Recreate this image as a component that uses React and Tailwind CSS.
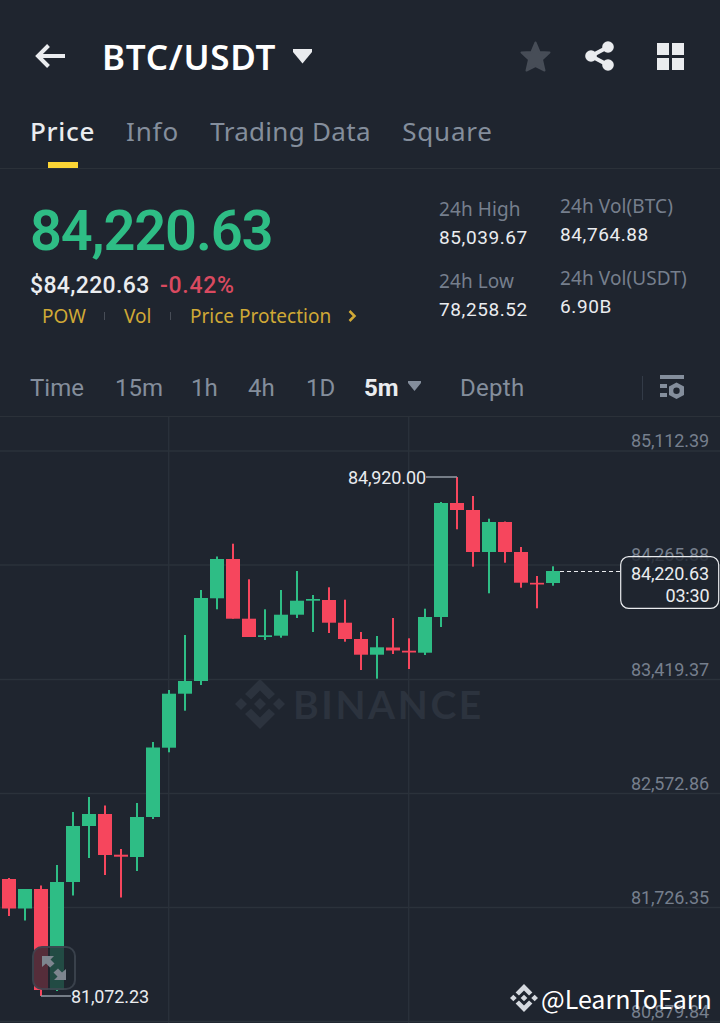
const tabs = [
  { label: 'Price', width: 'w-[65px]', spacing: 'tracking-[0.7px]', active: true },
  { label: 'Info', width: 'w-[53px]', spacing: 'tracking-[0.9px]' },
  { label: 'Trading Data', width: 'w-[161px]', spacing: 'tracking-[0.3px]' },
  { label: 'Square', width: 'w-[91px]', spacing: 'tracking-[0.8px]' },
];

const intervals = [
  { label: 'Time', width: 'w-[85px]' },
  { label: '15m', width: 'w-[76px]' },
  { label: '1h', width: 'w-[57px]' },
  { label: '4h', width: 'w-[58px]' },
  { label: '1D', width: 'w-[57px]' },
];

const stats = [
  [
    { label: '24h High', value: '85,039.67' },
    { label: '24h Low', value: '78,258.52' },
  ],
  [
    { label: '24h Vol(BTC)', value: '84,764.88' },
    { label: '24h Vol(USDT)', value: '6.90B' },
  ],
];

const GREEN = '#2ebd85';
const RED = '#f6465d';

// [wick top, body top, body bottom, wick bottom, color]
const candles = [
  [878, 879, 908.5, 916, RED],
  [889, 889, 908.5, 920.5, GREEN],
  [885.5, 889, 990, 996, RED],
  [865, 882, 990, 991, GREEN],
  [812, 826, 882, 895.5, GREEN],
  [797, 814, 826, 858, GREEN],
  [805.5, 814, 855, 875, RED],
  [849, 854.7, 856.7, 897.5, RED],
  [803, 817, 857, 871, GREEN],
  [742, 747.5, 817, 819, GREEN],
  [690, 693.7, 747.7, 752.3, GREEN],
  [635, 681, 693.7, 710.7, GREEN],
  [590, 598, 681, 685, GREEN],
  [556.5, 559, 598.3, 609.3, GREEN],
  [543.7, 559, 618.7, 618.7, RED],
  [579.3, 618.7, 637, 637, RED],
  [609.3, 635.3, 637, 640, GREEN],
  [590, 614.7, 635.7, 637.7, GREEN],
  [571, 600.7, 614.7, 618, GREEN],
  [595, 599, 600.7, 632, GREEN],
  [587.3, 600, 622.7, 633, RED],
  [599.7, 622.7, 639, 641.7, RED],
  [632, 639, 654.7, 670, RED],
  [636, 647.3, 654.7, 678.7, GREEN],
  [618, 647.5, 650.5, 654, RED],
  [638.3, 650.7, 652.5, 669, RED],
  [608.7, 617, 652.7, 655, GREEN],
  [502, 503, 617, 627, GREEN],
  [477, 503, 510, 529.3, RED],
  [496, 510, 552, 566.7, RED],
  [518.7, 522, 552, 593.3, GREEN],
  [521.5, 522, 552, 562.7, RED],
  [547, 552, 582.7, 587.7, RED],
  [576, 582.8, 584.5, 608.3, RED],
  [566.3, 571, 583, 585.7, GREEN],
];

const priceLevels = [
  { y: 451, label: '85,112.39' },
  { y: 565, label: '84,265.88' },
  { y: 679.5, label: '83,419.37' },
  { y: 793.5, label: '82,572.86' },
  { y: 907.5, label: '81,726.35' },
  { y: 1021.5, label: '80,879.84' },
];

const BinanceLogo = ({ className }) => (
  <svg viewBox="0 0 50 50" className={className} fill="currentColor">
    <path d="M25 0 L40 15 L34 20.5 L25 11.5 L16 20.5 L10 15 Z" />
    <path d="M25 50 L40 35 L34 29.5 L25 38.5 L16 29.5 L10 35 Z" />
    <path d="M25 19 L31 25 L25 31 L19 25 Z" />
    <path d="M6 19 L12 25 L6 31 L0 25 Z" />
    <path d="M44 19 L50 25 L44 31 L38 25 Z" />
  </svg>
);

const Header = () => (
  <header className="flex h-[112px] shrink-0 items-center pl-[35px] pr-[36px]">
    <svg width="31" height="24" viewBox="0 0 31 24" fill="none" stroke="#eaecef" strokeWidth="4">
      <path d="M30 12H3M13.5 1.5L3 12L13.5 22.5" />
    </svg>
    <h1 className="ml-[36px] w-[176px] whitespace-nowrap pt-px font-['Noto_Sans'] text-[35px] font-semibold leading-none tracking-[0.7px] text-white">
      BTC/USDT
    </h1>
    <svg className="ml-[15px]" width="19" height="15" viewBox="0 0 19 15" fill="#eaecef">
      <path d="M0 0H19V3L9.5 14.5L0 3Z" />
    </svg>
    <div className="ml-auto flex items-center">
      <svg width="31" height="31" viewBox="0 0 31 31" fill="#474d57" stroke="#474d57" strokeWidth="2" strokeLinejoin="round">
        <path d="M15.5 1.5L19.5 11L29.5 11.5L22 18.5L24.5 29.5L15.5 25L6.5 29.5L9 18.5L1.5 11.5L11.5 11Z" />
      </svg>
      <svg className="ml-[34px]" width="30" height="30" viewBox="0 0 30 30" fill="#eaecef">
        <path d="M23 6L6 15L23 24" fill="none" stroke="#eaecef" strokeWidth="4" />
        <circle cx="6" cy="15" r="5.8" />
        <circle cx="23" cy="6" r="5.8" />
        <circle cx="23" cy="24" r="5.8" />
      </svg>
      <div className="ml-[42px] grid grid-cols-2 gap-[3px]">
        <span className="size-3 bg-[#eaecef]" />
        <span className="size-3 bg-[#eaecef]" />
        <span className="size-3 bg-[#eaecef]" />
        <span className="size-3 bg-[#eaecef]" />
      </div>
    </div>
  </header>
);

const Tabs = () => (
  <nav className="flex h-[57px] shrink-0 gap-[31px] border-b border-[#2b3139] pl-[30px] font-['Noto_Sans'] text-[26px]">
    {tabs.map((tab) => (
      <div
        key={tab.label}
        className={`flex flex-col items-center whitespace-nowrap ${tab.width} ${tab.spacing} ${tab.active ? 'font-medium text-[#eaecef]' : 'text-[#848e9c]'}`}
      >
        <span className="mt-[3px] leading-8">{tab.label}</span>
        {tab.active && <span className="mt-auto h-1.5 w-[30px] bg-[#fcd535]" />}
      </div>
    ))}
  </nav>
);

const Summary = () => (
  <section className="flex h-[190px] shrink-0">
    <div className="w-[439px] whitespace-nowrap pl-[30px] pt-[34px]">
      <div className="text-[56px] font-semibold leading-[56px] tracking-[-1.2px] text-[#2ebd85]">84,220.63</div>
      <div className="mt-[15px] flex gap-[11px] text-[23px] font-medium leading-6 tracking-[0.35px]">
        <span className="w-[119px] text-[#eaecef]">$84,220.63</span>
        <span className="tracking-[0.7px] text-[#d94a60]">-0.42%</span>
      </div>
      <div className="ml-[12px] mt-[6px] flex items-center font-['Noto_Sans'] text-[19px] leading-6 text-[#d0a936]">
        <span className="w-[44px]">POW</span>
        <span className="ml-[18px] h-2 w-px bg-[#474d57]" />
        <span className="ml-[19px] w-[28px]">Vol</span>
        <span className="ml-[18px] h-2 w-px bg-[#474d57]" />
        <span className="ml-[19px] w-[141px]">Price Protection</span>
        <svg className="ml-[17px]" width="9" height="12" viewBox="0 0 9 12" fill="none" stroke="currentColor" strokeWidth="2.5">
          <path d="M1.5 1L6.5 6L1.5 11" />
        </svg>
      </div>
    </div>
    {stats.map((column, index) => (
      <div key={index} className={index === 0 ? 'w-[121px] pt-[28px]' : 'pt-[25px]'}>
        {column.map((stat) => (
          <div key={stat.label} className="h-[72px] whitespace-nowrap">
            <div className="font-['Noto_Sans'] text-[19px] leading-6 tracking-[0.1px] text-[#767f8d]">{stat.label}</div>
            <div className="mt-[5px] text-[19px] leading-6 tracking-[0.6px] text-[#eaecef]">{stat.value}</div>
          </div>
        ))}
      </div>
    ))}
  </section>
);

const IntervalBar = () => (
  <div className="flex h-[58px] shrink-0 items-center border-b border-[#2b3139] pl-[30px] text-[24px] text-[#848e9c]">
    {intervals.map((item) => (
      <span key={item.label} className={item.width}>{item.label}</span>
    ))}
    <span className="ml-px w-[35px] font-bold text-[#eaecef]">5m</span>
    <svg className="ml-[9px] -mt-1" width="13" height="10" viewBox="0 0 13 10" fill="currentColor">
      <path d="M0 0H13V2L6.5 10L0 2Z" />
    </svg>
    <span className="ml-[39px] tracking-[0.3px]">Depth</span>
    <span className="ml-auto h-6 w-px bg-[#333b47]" />
    <svg className="ml-[17px] mr-[35px]" width="25" height="25" viewBox="0 0 25 25" fill="currentColor">
      <path d="M0 0H24V4H0ZM0 9H7V13H0ZM0 18H7V22H0Z" />
      <path fillRule="evenodd" d="M16.5 7.5L24 11.5V20L16.5 24L9 20V11.5ZM16.5 12.5a3.2 3.2 0 1 0 0 6.4a3.2 3.2 0 1 0 0-6.4Z" />
    </svg>
  </div>
);

const CandleChart = () => (
  <svg className="block" width="720" height="606" viewBox="0 417 720 606" fontFamily="Roboto, sans-serif" fontSize="18">
    <g stroke="#2b323b" strokeWidth="1.3">
      {priceLevels.map((level) => (
        <line key={level.label} x1="0" x2="720" y1={level.y} y2={level.y} />
      ))}
      <line x1="168.7" x2="168.7" y1="417" y2="1023" />
      <line x1="408.7" x2="408.7" y1="417" y2="1023" />
    </g>

    {priceLevels.map((level) => (
      <text key={level.label} x="631" y={level.y - 4} textLength="78" fill="#767f8d">{level.label}</text>
    ))}

    {candles.map(([high, top, bottom, low, color], i) => (
      <g key={i} fill={color}>
        <rect x={8 + i * 16} y={high} width="2" height={low - high} />
        <rect x={2 + i * 16} y={top} width="14" height={bottom - top} />
      </g>
    ))}

    {/* High / low markers */}
    <path d="M426 477H457M41 996H71" fill="none" stroke="#929aa5" strokeWidth="1.6" />
    <text x="348" y="484" textLength="78" fill="#eaecef">84,920.00</text>
    <text x="71" y="1003" textLength="78" fill="#eaecef">81,072.23</text>

    {/* Current price */}
    <line x1="560" x2="620" y1="571.5" y2="571.5" stroke="#eaecef" strokeWidth="1.2" strokeDasharray="4 3" />
    <rect x="620.7" y="556.7" width="98" height="51.6" rx="8" fill="#1f252f" fillOpacity="0.8" stroke="#eaecef" strokeWidth="1.2" />
    <text x="631" y="580" textLength="78" fill="#eaecef">84,220.63</text>
    <text x="665.5" y="602" textLength="44" fill="#eaecef">03:30</text>
  </svg>
);

export default function App() {
  return (
    <div className="relative flex h-[1023px] w-[720px] flex-col overflow-hidden bg-[#1f252f] font-[Roboto,sans-serif]">
      <Header />
      <Tabs />
      <Summary />
      <IntervalBar />
      <CandleChart />

      <div className="absolute left-[235px] top-[679px] flex items-center text-[#2c333e]">
        <BinanceLogo className="size-[50px]" />
        <span className="ml-[8px] font-[Lato,sans-serif] text-[39px] font-bold leading-none tracking-[2.6px]">BINANCE</span>
      </div>

      <button className="absolute left-[32px] top-[946px] flex size-11 items-center justify-center rounded-[10px] border-2 border-[#414852]/80 bg-[#1f252f]/75">
        <svg width="26" height="26" viewBox="0 0 26 26" fill="#7d858f">
          <path d="M1 1H13L9.5 4.5L13.5 8.5L9 12.5L5 8.5L1 12Z" />
          <path d="M25 25H13L16.5 21.5L12.5 17.5L17 13.5L21 17.5L25 14Z" />
        </svg>
      </button>

      <div className="absolute left-[510px] top-[984px] flex items-center whitespace-nowrap text-white">
        <BinanceLogo className="size-7 text-[#d5d9df]" />
        <span className="ml-[3px] font-['Noto_Sans_CJK_SC',sans-serif] text-[25px] leading-7">@LearnToEarn</span>
      </div>
    </div>
  );
}
